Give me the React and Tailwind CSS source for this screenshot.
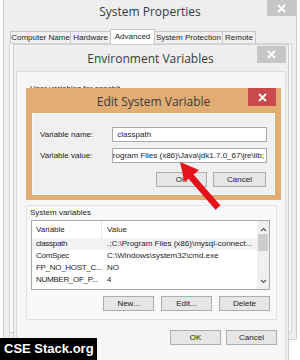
import React from 'react';

// petite croix blanche des barres de titre
const CloseX = () => (
  <svg width="9" height="9" viewBox="0 0 9 9">
    <path d="M1.5 1.5 L7.5 7.5 M7.5 1.5 L1.5 7.5" stroke="white" strokeWidth="1.8" strokeLinecap="round" />
  </svg>
);

const Chevron = ({ down }) => (
  <svg width="7" height="5" viewBox="0 0 7 5">
    <path d={down ? 'M1 1 L3.5 3.5 L6 1' : 'M1 4 L3.5 1.5 L6 4'} fill="none" stroke="#555" strokeWidth="1.1" />
  </svg>
);

const Btn = ({ children, className = '' }) => (
  <div className={`flex items-center justify-center border border-[#adadad] bg-[#e6e6e6] text-[8px] text-[#222] ${className}`}>
    {children}
  </div>
);

const tabs = [
  { label: 'Computer Name', w: 'w-[61px]' },
  { label: 'Hardware', w: 'w-[41px]' },
  { label: 'Advanced', w: 'w-[45px]', active: true },
  { label: 'System Protection', w: 'w-[69px]' },
  { label: 'Remote', w: 'w-[34px]' },
];

const rows = [
  { name: 'classpath', value: '.;C:\\Program Files (x86)\\mysql-connect...', sel: true },
  { name: 'ComSpec', value: 'C:\\Windows\\system32\\cmd.exe' },
  { name: 'FP_NO_HOST_C...', value: 'NO' },
  { name: 'NUMBER_OF_P...', value: '4' },
];

export default function App() {
  return (
    <div className="relative w-[300px] h-[360px] overflow-hidden bg-white font-['Liberation_Sans',Arial,sans-serif] text-[#1e1e1e]">
      {/* System Properties */}
      <div className="ml-[3px] w-[294px] h-[340px] bg-[#eeeeee] border-x border-b border-[#d0d0d0] flex flex-col">
        <div className="flex h-[29px]">
          <div className="w-[29px]" />
          <div className="flex-1 text-center pt-[3px] text-[12px] font-['Open_Sans',sans-serif] text-[#3a3a3a]">
            System Properties
          </div>
          <div className="w-[29px] h-[16px] bg-[#c6c6c6] flex items-center justify-center">
            <CloseX />
          </div>
        </div>
        <div className="flex items-end h-[14px] pl-[6px]">
          {tabs.map((t) => (
            <div
              key={t.label}
              className={`${t.w} flex items-center justify-center text-[8px] border-t border-x border-[#c8c8c8] -mr-px ${
                t.active ? 'h-[15px] bg-white relative z-10 -mb-px' : 'h-[12px] bg-[#f0f0f0]'
              }`}
            >
              {t.label}
            </div>
          ))}
        </div>
        <div className="ml-[5px] mr-[4px] flex-1 mb-[6px] bg-[#fafafa] border border-[#d6d6d6]" />
      </div>

      {/* Environment Variables */}
      <div className="absolute left-[13px] top-[44px] w-[276px] h-[330px] bg-[#efefef] border border-[#cfcfcf] flex flex-col">
        <div className="flex h-[26px]">
          <div className="w-[30px]" />
          <div className="flex-1 text-center pt-[5px] text-[12px] font-['Open_Sans',sans-serif] text-[#3a3a3a]">
            Environment Variables
          </div>
          <div className="w-[29px] h-[17px] mt-[1px] mr-[2px] bg-[#c6c6c6] flex items-center justify-center">
            <CloseX />
          </div>
        </div>
        <div className="mx-[2px] flex-1 bg-[#f6f6f6] border border-[#dcdcdc] flex flex-col text-[8px]">
          <div className="pl-[13px] pt-[11px] h-[133px]">User variables for sanchit</div>

          <div className="ml-[9px] w-[251px] h-[115px] border border-[#e2e2e2] bg-[#f9f9f9] flex flex-col">
            <div className="pl-[3px] pt-[1px] h-[14px]">System variables</div>
            <div className="ml-[4px] w-[239px] h-[70px] bg-white border border-[#a9a9a9] flex">
              <div className="flex-1 flex flex-col">
                <div className="flex h-[17px] items-center">
                  <div className="w-[70px] pl-[4px] h-full flex items-center border-r border-[#e5e5e5]">Variable</div>
                  <div className="pl-[5px]">Value</div>
                </div>
                {rows.map((r) => (
                  <div key={r.name} className={`flex h-[12px] items-center ${r.sel ? 'bg-[#f2f2f2]' : ''}`}>
                    <div className="w-[70px] pl-[4px] whitespace-nowrap tracking-[-0.3px]">{r.name}</div>
                    <div className="pl-[5px] whitespace-nowrap overflow-hidden">{r.value}</div>
                  </div>
                ))}
              </div>
              <div className="w-[12px] bg-[#f0f0f0] flex flex-col items-center">
                <div className="h-[13px] flex items-end pb-[2px]"><Chevron /></div>
                <div className="w-[10px] h-[17px] bg-[#cdcdcd]" />
                <div className="flex-1" />
                <div className="h-[12px] flex items-start pt-[2px]"><Chevron down /></div>
              </div>
            </div>
            <div className="flex justify-end gap-[7px] mt-[6px] mr-[6px]">
              <Btn className="w-[51px] h-[15px]">New...</Btn>
              <Btn className="w-[51px] h-[15px]">Edit...</Btn>
              <Btn className="w-[51px] h-[15px]">Delete</Btn>
            </div>
          </div>

          <div className="flex justify-end gap-[5px] mt-[10px] mr-[8px]">
            <Btn className="w-[51px] h-[15px]">OK</Btn>
            <Btn className="w-[51px] h-[15px]">Cancel</Btn>
          </div>
        </div>

        {/* Edit System Variable */}
        <div className="absolute left-[12px] top-[43px] w-[255px] h-[112px] bg-[#e1ad72] flex flex-col">
          <div className="flex h-[25px]">
            <div className="w-[33px]" />
            <div className="flex-1 text-center pt-[5px] text-[12px] font-['Open_Sans',sans-serif] text-[#3a3a3a]">
              Edit System Variable
            </div>
            <div className="w-[28px] h-[18px] mr-[5px] bg-[#c94a4a] flex items-center justify-center">
              <CloseX />
            </div>
          </div>
          <div className="mx-[6px] mb-[5px] flex-1 bg-[#f0f0f0] border border-[#f7f7f7] flex flex-col text-[8px] px-[7px]">
            <div className="flex items-center mt-[13px] h-[15px]">
              <div className="w-[73px]">Variable name:</div>
              <div className="w-[156px] h-[15px] bg-white border border-[#ababab] flex items-center pl-[4px]">classpath</div>
            </div>
            <div className="flex items-center mt-[6px] h-[15px]">
              <div className="w-[73px]">Variable value:</div>
              <div className="w-[156px] h-[15px] bg-white border border-[#ababab] flex items-center justify-end pr-[2px] overflow-hidden whitespace-nowrap">
                C:\Program Files (x86)\Java\jdk1.7.0_67\jre\lib;
              </div>
            </div>
            <div className="flex justify-end gap-[6px] mt-[9px] mr-[1px]">
              <Btn className="w-[51px] h-[15px] border-[#3c7fb1] bg-[#e5f1fb]">OK</Btn>
              <Btn className="w-[53px] h-[15px]">Cancel</Btn>
            </div>
          </div>
        </div>
      </div>

      {/* flèche rouge */}
      <svg className="absolute left-0 top-0" width="300" height="360" viewBox="0 0 300 360">
        <path d="M180 162 L199 170 L193.5 174.6 L220.5 205.6 L215.5 209.8 L188.5 178.8 L184.5 182 Z" fill="#e5121b" />
      </svg>

      {/* filigrane */}
      <div className="absolute left-0 bottom-0 w-[97px] h-[22px] bg-black flex items-center pl-[4px] text-white font-bold text-[13px]">
        CSE Stack.org
      </div>
    </div>
  );
}
